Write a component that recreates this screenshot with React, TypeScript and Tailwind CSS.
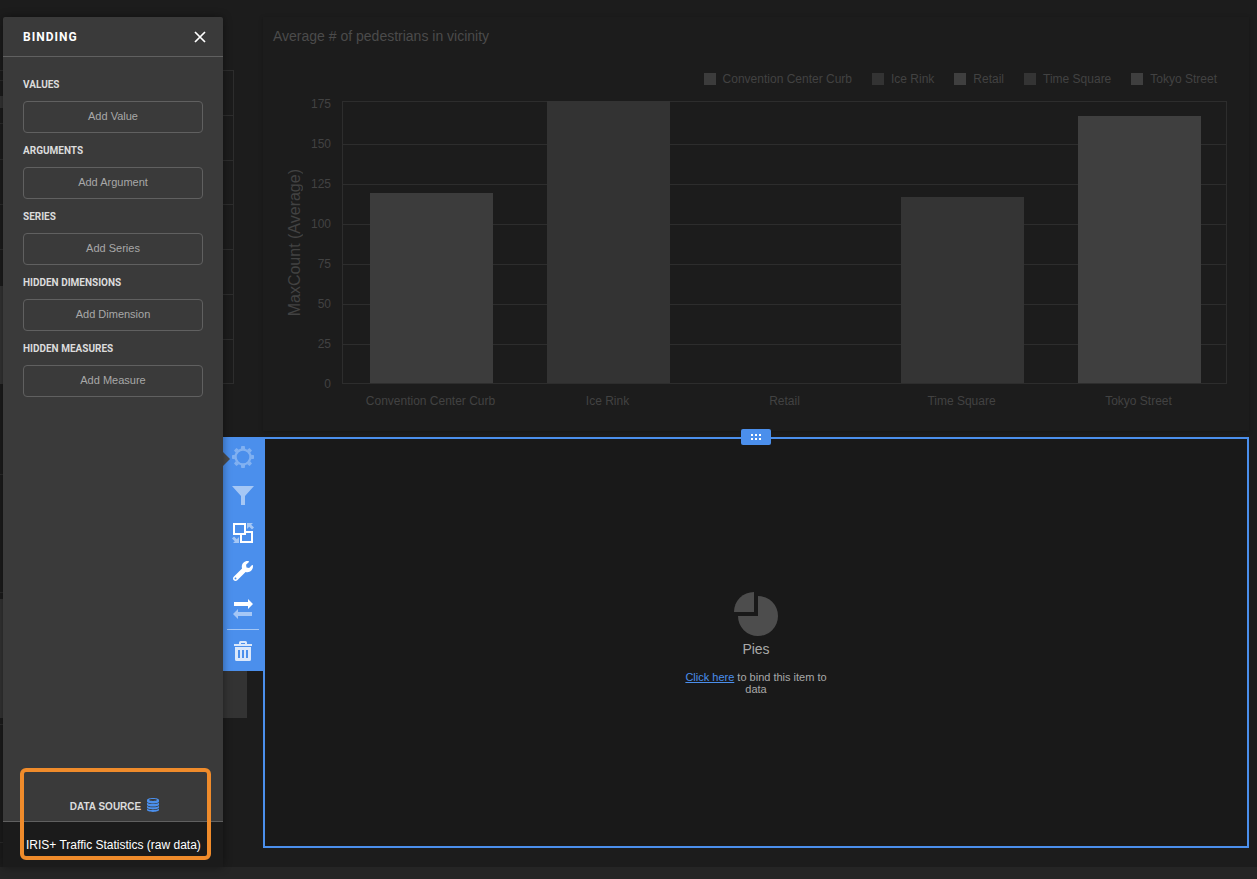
import { FaWrench } from 'react-icons/fa'

interface Bar {
  name: string
  value: number
  fill: string
}

const bars: Bar[] = [
  { name: 'Convention Center Curb', value: 119, fill: 'bg-[#3c3c3c]' },
  { name: 'Ice Rink', value: 177, fill: 'bg-[#333333]' },
  { name: 'Retail', value: 0, fill: 'bg-[#3f3f3f]' },
  { name: 'Time Square', value: 116, fill: 'bg-[#343434]' },
  { name: 'Tokyo Street', value: 167, fill: 'bg-[#3f3f3f]' },
]

const ticks = [0, 25, 50, 75, 100, 125, 150, 175]
const gridTicks = [25, 50, 75, 100, 125, 150]

// plot height in pixels per unit
const SCALE = 1.6

const sections = [
  { title: 'VALUES', action: 'Add Value' },
  { title: 'ARGUMENTS', action: 'Add Argument' },
  { title: 'SERIES', action: 'Add Series' },
  { title: 'HIDDEN DIMENSIONS', action: 'Add Dimension' },
  { title: 'HIDDEN MEASURES', action: 'Add Measure' },
]

// visible edge of the widgets behind the panel, top to bottom
const edge = [
  { h: 54, c: 'border-b border-[#2b2b2b]' },
  { h: 10, c: 'border-b border-[#2b2b2b]' },
  { h: 15, c: '' },
  { h: 12, c: 'bg-[#333333]' },
  { h: 16, c: 'border-b border-[#2b2b2b]' },
  { h: 36, c: 'border-b border-[#2b2b2b]' },
  { h: 45, c: 'border-b border-[#2b2b2b]' },
  { h: 45, c: 'border-b border-[#2b2b2b]' },
  { h: 36, c: '' },
  { h: 98, c: 'bg-[#333333]' },
  { h: 91, c: 'border-b border-[#2b2b2b]' },
  { h: 118, c: 'border-b border-[#2b2b2b]' },
  { h: 6, c: '' },
  { h: 119, c: 'bg-[#333333]' },
  { h: 7, c: 'border-b border-[#2b2b2b]' },
  { h: 118, c: 'border-b border-[#2b2b2b]' },
]

function GearIcon() {
  return (
    <svg width="22" height="22" viewBox="0 0 22 22" fill="none" stroke="#fff" opacity="0.3">
      <circle cx="11" cy="11" r="7.4" strokeWidth="2.200" />
      {[0, 45, 90, 135, 180, 225, 270, 315].map((a) => (
        <path key={a} d="M8.800 2.900 9.300 0h3.400L13.200 2.900z" fill="#fff" stroke="none" transform={`rotate(${a} 11 11)`} />
      ))}
    </svg>
  )
}

function FilterIcon() {
  return (
    <svg width="22" height="22" viewBox="0 0 22 22" fill="#fff" opacity="0.5">
      <path d="M0 2h22l-9 10v9H9v-9z" />
    </svg>
  )
}

function ConvertIcon() {
  return (
    <svg width="22" height="22" viewBox="0 0 22 22">
      <g fill="#fff" opacity="0.5">
        <path d="M15 1h6l-1.800 1.800 2.800 2.700-2 2-2.800-2.800L15 7z" />
        <path d="M7 21H1l1.800-1.800L0 16.500l2-2 2.800 2.800L7 15z" />
      </g>
      <rect x="9" y="10" width="11" height="10" fill="none" stroke="#fff" strokeWidth="2" />
      <rect x="2" y="2" width="11" height="10" fill="#4b8fec" stroke="#fff" strokeWidth="2" />
    </svg>
  )
}

function SwapIcon() {
  return (
    <svg width="22" height="22" viewBox="0 0 22 22" fill="#fff">
      <path d="M2 4h14V1l5 5-5 5V8H2z" />
      <path d="M20 14H6v-3l-5 5 5 5v-3h14z" opacity="0.5" />
    </svg>
  )
}

function TrashIcon() {
  return (
    <svg width="22" height="22" viewBox="0 0 22 22" fill="#fff" opacity="0.8">
      <path d="M2 4h5V2.500Q7 1 8.500 1h5Q15 1 15 2.500V4h5v2H2zM9 4h4V3H9z" fillRule="evenodd" />
      <path
        d="M3 7h16v12.500q0 1.500-1.500 1.500h-13Q3 21 3 19.500zM6 10v8h2v-8zM10 10v8h2v-8zM14 10v8h2v-8z"
        fillRule="evenodd"
      />
    </svg>
  )
}

function DatabaseIcon() {
  return (
    <svg width="12" height="14" viewBox="0 0 12 14" fill="#4b8fec">
      <path
        d="M6 0C2.700 0 0 .9 0 2v1.400c0 1.100 2.700 2 6 2s6-.9 6-2V2c0-1.100-2.700-2-6-2zm0 1.100c2.300 0 4 .4 4 .9s-1.700.9-4 .9-4-.4-4-.9 1.700-.9 4-.9z"
        fillRule="evenodd"
      />
      <path d="M0 4.600c1 1 3.300 1.500 6 1.500s5-.5 6-1.500v2.100c0 1-2.700 1.900-6 1.900s-6-.9-6-1.900z" />
      <path d="M0 7.700c1 1 3.300 1.500 6 1.500s5-.5 6-1.500v1.900c0 1-2.700 1.900-6 1.900s-6-.9-6-1.900z" />
      <path d="M0 10.600c1 1 3.300 1.500 6 1.500s5-.5 6-1.500v1.500c0 1-2.700 1.900-6 1.900s-6-.9-6-1.900z" />
    </svg>
  )
}

function BindingPanel() {
  return (
    <aside className="relative z-20 w-[220px] shrink-0 flex flex-col rounded-t-[2px] bg-[#3a3a3a] shadow-[0_0_8px_rgba(0,0,0,0.4)]">
      <header className="h-10 flex items-center justify-between pl-5 pr-4 border-b border-[#606060]">
        <h2 className="font-[Roboto,sans-serif] text-[12px] font-bold tracking-[1px] text-white">BINDING</h2>
        <button aria-label="Close" className="w-[14px] h-[14px] flex items-center justify-center">
          <svg width="12" height="12" viewBox="0 0 12 12" stroke="#fff" strokeWidth="1.700">
            <path d="M1 1l10 10M11 1L1 11" />
          </svg>
        </button>
      </header>

      <div className="flex-1 flex flex-col gap-[10px] px-5 pt-5">
        {sections.map((s) => (
          <section key={s.title}>
            <h3 className="mb-2 font-[Roboto,sans-serif] text-[10px] leading-4 font-bold text-[#dcdcdc]">{s.title}</h3>
            <button className="block w-full h-8 pb-[2px] rounded border border-[#606060] text-[11px] leading-[14px] text-[#a8a8a8]">
              {s.action}
            </button>
          </section>
        ))}
      </div>

      <div className="h-8 flex items-start justify-center gap-[6px] pl-[3px] pt-2 border-b border-[#606060]">
        <span className="text-[10px] leading-[18px] font-bold text-[#dcdcdc]">DATA SOURCE</span>
        <DatabaseIcon />
      </div>
      <div className="h-[45px] flex items-center pl-[23px] bg-[#1b1b1b] text-[12px] text-white whitespace-nowrap">
        IRIS+ Traffic Statistics (raw data)
      </div>

      {/* Highlight around the data source */}
      <div className="absolute left-[17px] right-[12px] bottom-[7px] h-[92px] rounded-md border-4 border-[#ef8b2b] pointer-events-none" />
    </aside>
  )
}

function Toolbar() {
  const button = 'w-full h-[38px] flex items-center justify-center'
  return (
    <div className="relative z-10 pt-px bg-[#4b8fec]">
      {/* Pointer towards the panel */}
      <div className="absolute left-0 top-[15px] border-y-[7px] border-y-transparent border-l-[7px] border-l-[#4a4a4a]" />
      <button aria-label="Binding" className={button}>
        <GearIcon />
      </button>
      <button aria-label="Filtering" className={button}>
        <FilterIcon />
      </button>
      <button aria-label="Convert To" className={button}>
        <ConvertIcon />
      </button>
      <button aria-label="Options" className={button}>
        <FaWrench size={20} color="#fff" />
      </button>
      <button aria-label="Move" className={button}>
        <SwapIcon />
      </button>
      <hr className="mx-1 mt-px border-[#a5c7f5]" />
      <button aria-label="Delete" className="w-full h-[41px] flex items-center justify-center">
        <TrashIcon />
      </button>
    </div>
  )
}

function BarChart() {
  return (
    <section className="h-[414px] flex flex-col pl-[10px] pr-[22px] text-[12px] text-[#424242] shadow-[0_1px_4px_rgba(0,0,0,0.25)]">
      <h1 className="h-[38px] flex items-center text-[14px] text-[#4b4b4b]">Average # of pedestrians in vicinity</h1>
      <div className="h-[46px] flex items-center justify-end gap-5 pt-[2px] mr-[10px]">
        {bars.map((b) => (
          <span key={b.name} className="flex items-center gap-[7px]">
            <span className={`w-3 h-3 ${b.fill}`} />
            {b.name}
          </span>
        ))}
      </div>

      <div className="h-[283px] flex items-end">
        <div className="w-6 ml-[10px] self-center text-[16px] leading-6 [writing-mode:vertical-rl] rotate-180">
          MaxCount (Average)
        </div>
        <div className="w-6 flex flex-col-reverse items-end -mb-5 -mt-5">
          {ticks.map((t) => (
            <span key={t} className="h-10 flex items-center">
              {t}
            </span>
          ))}
        </div>
        <div className="relative flex-1 h-full ml-[11px] border border-[#2d2d2d]">
          {gridTicks.map((t) => (
            <div key={t} className="absolute inset-x-0 h-px bg-[#2d2d2d]" style={{ bottom: t * SCALE - 2 }} />
          ))}
          <div className="relative h-full flex items-end -mr-[2px]">
            {bars.map((b) => (
              <div key={b.name} className="flex-1 flex justify-center">
                <div className={`w-[70%] max-h-[282px] ${b.fill}`} style={{ height: Math.round(b.value * SCALE) }} />
              </div>
            ))}
          </div>
        </div>
      </div>
      <div className="flex ml-[69px] pt-2">
        {bars.map((b) => (
          <span key={b.name} className="flex-1 text-center leading-[18px]">
            {b.name}
          </span>
        ))}
      </div>
    </section>
  )
}

function PiesCard() {
  return (
    <section className="relative flex-1 mt-[6px] pt-[2px] flex flex-col items-center justify-center border-2 border-[#4b8fec] bg-[#191919] text-[#a8a8a8]">
      <button
        aria-label="Drag item"
        className="absolute -top-[10px] left-1/2 -translate-x-1/2 w-[30px] h-4 flex items-center justify-center rounded-[2px] bg-[#4b8fec]"
      >
        <svg width="10" height="6" viewBox="0 0 10 6" fill="#fff">
          <path d="M0 0h2v2H0zM4 0h2v2H4zM8 0h2v2H8zM0 4h2v2H0zM4 4h2v2H4zM8 4h2v2H8z" />
        </svg>
      </button>

      <svg width="44" height="44" viewBox="0 0 44 44" fill="#4d4d4d">
        <path d="M20 0v20H0A20 20 0 0 1 20 0z" />
        <path d="M24 4v20H4A20 20 0 1 0 24 4z" />
      </svg>
      <h2 className="mt-1 text-[14px] leading-[18px]">Pies</h2>
      <p className="mt-[13px] w-[150px] text-center text-[11px] leading-3">
        <a href="#bind" className="text-[#4b8fec] underline">
          Click here
        </a>{' '}
        to bind this item to data
      </p>
    </section>
  )
}

export default function App() {
  return (
    <div className="min-h-screen flex flex-col bg-[#1c1c1c] font-['Liberation_Sans',Arial,sans-serif]">
      <div className="flex-1 flex pt-[17px]">
        <div className="w-[3px] shrink-0">
          {edge.map((e, i) => (
            <div key={i} className={e.c} style={{ height: e.h }} />
          ))}
        </div>

        <BindingPanel />

        <div className="w-10 shrink-0">
          <div className="h-[420px] pt-[53px]">
            <div className="w-[11px] h-[314px] flex flex-col pb-[43px] border-y border-r border-[#2d2d2d]">
              {[0, 1, 2, 3, 4, 5].map((i) => (
                <div key={i} className="flex-1 border-b border-[#2d2d2d]" />
              ))}
            </div>
          </div>
          <Toolbar />
          <div className="w-6 h-[47px] bg-[#333333]" />
        </div>

        <main className="flex-1 min-w-0 flex flex-col pr-2 pb-[19px]">
          <BarChart />
          <PiesCard />
        </main>
      </div>
      <footer className="h-3 bg-[#252525]" />
    </div>
  )
}
